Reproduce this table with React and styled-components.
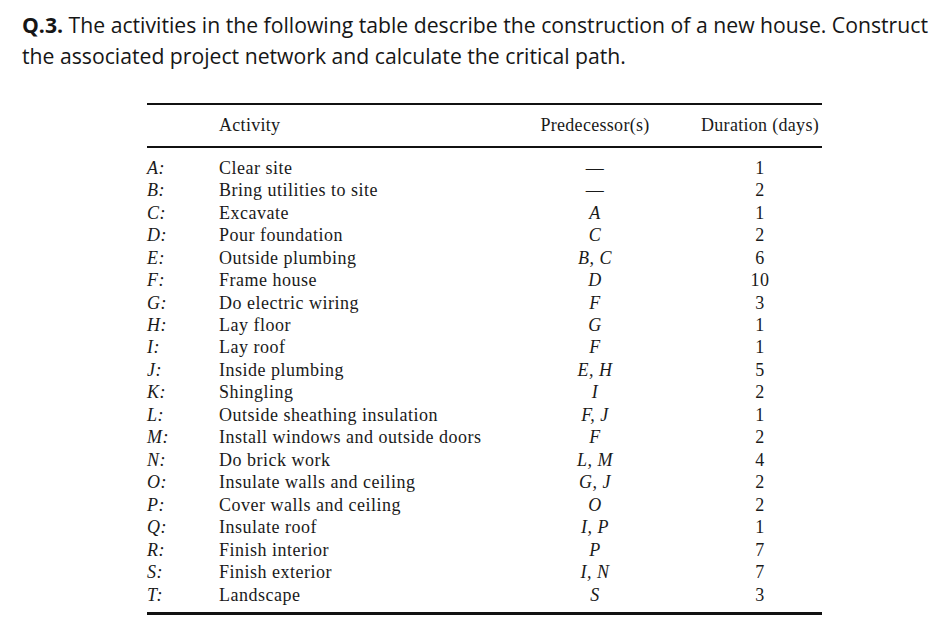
import React from "react";
import styled, { createGlobalStyle } from "styled-components";

const Global = createGlobalStyle`
  html, body { margin: 0; padding: 0; background: #fff; }
  body { width: 951px; height: 642px; overflow: hidden; }
`;

const Page = styled.div`
  padding: 9px 0 0 22px;
  color: #111;
`;

const Question = styled.p`
  margin: 0;
  font-family: "Open Sans", Lato, sans-serif;
  font-size: 21.2px;
  line-height: 31px;
  white-space: nowrap;
  color: #161616;
  b { font-weight: 700; }
`;

const Table = styled.div`
  margin: 32px 0 0 125px;
  width: 675px;
  font-family: "Liberation Serif", "DejaVu Serif", serif;
  font-size: 18px;
  color: #1a1a1a;
`;

const HeadRow = styled.div`
  display: grid;
  grid-template-columns: 72px 311px 130px 1fr 124px;
  height: 41px;
  align-items: center;
  border-top: 2px solid #111;
  border-bottom: 2px solid #111;
  letter-spacing: 0.3px;
`;

const Body = styled.div`
  padding: 9px 0 6px;
  border-bottom: 3px solid #111;
`;

const Row = styled.div`
  display: grid;
  grid-template-columns: 72px 311px 130px 1fr 124px;
  height: 22.47px;
  align-items: center;
  letter-spacing: 0.5px;
`;

const Cell = styled.div`
  grid-column: ${(p) => p.$col};
  text-align: ${(p) => (p.$center ? "center" : "left")};
  font-style: ${(p) => (p.$italic ? "italic" : "normal")};
  white-space: nowrap;
`;

const rows = [
  ["A", "Clear site", "—", "1"],
  ["B", "Bring utilities to site", "—", "2"],
  ["C", "Excavate", "A", "1"],
  ["D", "Pour foundation", "C", "2"],
  ["E", "Outside plumbing", "B, C", "6"],
  ["F", "Frame house", "D", "10"],
  ["G", "Do electric wiring", "F", "3"],
  ["H", "Lay floor", "G", "1"],
  ["I", "Lay roof", "F", "1"],
  ["J", "Inside plumbing", "E, H", "5"],
  ["K", "Shingling", "I", "2"],
  ["L", "Outside sheathing insulation", "F, J", "1"],
  ["M", "Install windows and outside doors", "F", "2"],
  ["N", "Do brick work", "L, M", "4"],
  ["O", "Insulate walls and ceiling", "G, J", "2"],
  ["P", "Cover walls and ceiling", "O", "2"],
  ["Q", "Insulate roof", "I, P", "1"],
  ["R", "Finish interior", "P", "7"],
  ["S", "Finish exterior", "I, N", "7"],
  ["T", "Landscape", "S", "3"],
];

export default function App() {
  return (
    <>
      <Global />
      <Page>
        <Question>
          <b>Q.3.</b> The activities in the following table describe the construction of a new house. Construct
          <br />
          the associated project network and calculate the critical path.
        </Question>
        <Table>
          <HeadRow>
            <Cell $col={2}>Activity</Cell>
            <Cell $col={3} $center>Predecessor(s)</Cell>
            <Cell $col={5} $center>Duration (days)</Cell>
          </HeadRow>
          <Body>
            {rows.map(([k, desc, pred, dur]) => (
              <Row key={k}>
                <Cell $col={1} $italic>{k}:</Cell>
                <Cell $col={2}>{desc}</Cell>
                <Cell $col={3} $center $italic={pred !== "—"}>{pred}</Cell>
                <Cell $col={5} $center>{dur}</Cell>
              </Row>
            ))}
          </Body>
        </Table>
      </Page>
    </>
  );
}
